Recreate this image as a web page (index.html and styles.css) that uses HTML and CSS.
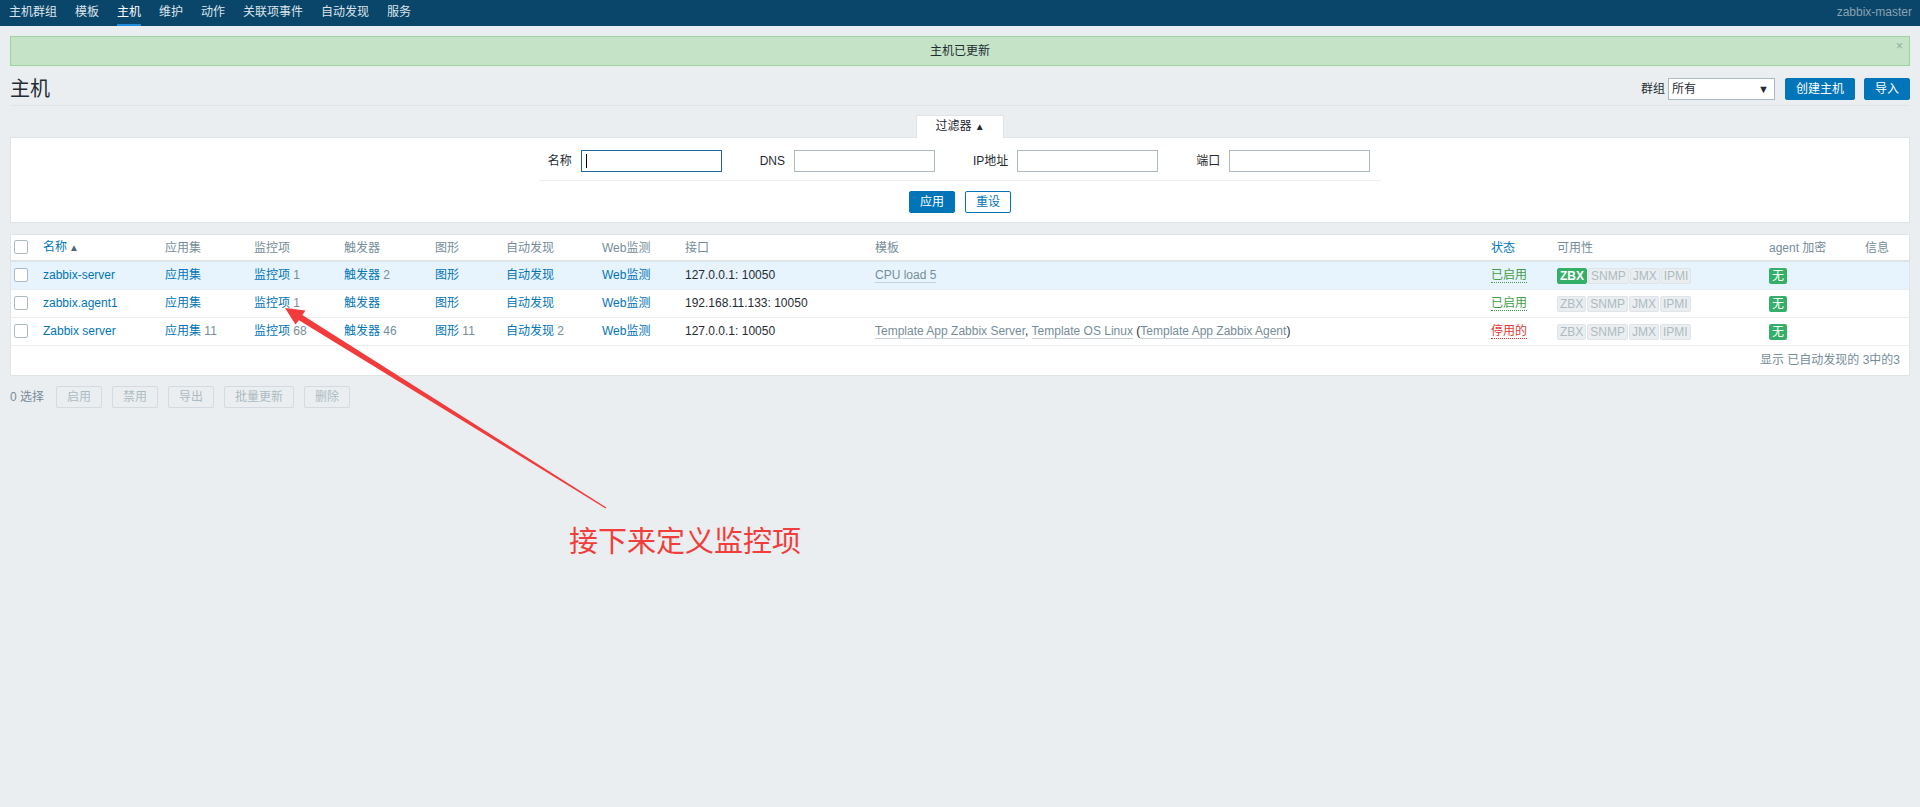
FILE: index.html
```html
<!DOCTYPE html>
<html lang="zh-CN">
<head>
<meta charset="utf-8">
<title>主机</title>
<link rel="stylesheet" href="styles.css">
</head>
<body>
<header class="topnav">
  <nav class="topnav-menu">
    <a class="topnav-item"><span>主机群组</span></a>
    <a class="topnav-item"><span>模板</span></a>
    <a class="topnav-item active"><span>主机</span></a>
    <a class="topnav-item"><span>维护</span></a>
    <a class="topnav-item"><span>动作</span></a>
    <a class="topnav-item"><span>关联项事件</span></a>
    <a class="topnav-item"><span>自动发现</span></a>
    <a class="topnav-item"><span>服务</span></a>
  </nav>
  <div class="server-name">zabbix-master</div>
</header>

<main class="page">
  <div class="msg-good">
    主机已更新
    <span class="msg-close">×</span>
  </div>

  <div class="header-title">
    <h1>主机</h1>
    <div class="header-controls">
      <span class="ctrl-label">群组</span>
      <div class="select"><span>所有</span><span class="select-arrow">▼</span></div>
      <button class="btn btn-primary btn-create">创建主机</button>
      <button class="btn btn-primary">导入</button>
    </div>
  </div>

  <div class="filter">
    <div class="filter-tab-row">
      <div class="filter-tab">过滤器 <span class="tab-arrow">▲</span></div>
    </div>
    <div class="filter-box">
      <div class="filter-forms">
        <div class="filter-cell"><label>名称</label><div class="input focus"><span class="caret"></span></div></div>
        <div class="filter-cell"><label>DNS</label><div class="input"></div></div>
        <div class="filter-cell"><label>IP地址</label><div class="input"></div></div>
        <div class="filter-cell"><label>端口</label><div class="input"></div></div>
      </div>
      <div class="filter-buttons">
        <button class="btn btn-primary">应用</button>
        <button class="btn btn-alt">重设</button>
      </div>
    </div>
  </div>

  <div class="list">
    <table class="list-table">
      <colgroup>
        <col class="c-check"><col class="c-name"><col class="c-apps"><col class="c-items"><col class="c-trig"><col class="c-graph"><col class="c-disc"><col class="c-web"><col class="c-iface"><col class="c-tpl"><col class="c-status"><col class="c-avail"><col class="c-enc"><col class="c-info">
      </colgroup>
      <thead>
        <tr>
          <th class="td-check"><span class="checkbox"></span></th>
          <th><a class="link">名称</a><span class="sort-arrow">▲</span></th>
          <th>应用集</th>
          <th>监控项</th>
          <th>触发器</th>
          <th>图形</th>
          <th>自动发现</th>
          <th>Web监测</th>
          <th>接口</th>
          <th>模板</th>
          <th><a class="link">状态</a></th>
          <th>可用性</th>
          <th>agent 加密</th>
          <th>信息</th>
        </tr>
      </thead>
      <tbody>
        <tr class="row-hover">
          <td class="td-check"><span class="checkbox"></span></td>
          <td><a class="link">zabbix-server</a></td>
          <td><a class="link">应用集</a></td>
          <td><a class="link">监控项</a><span class="count"> 1</span></td>
          <td><a class="link">触发器</a><span class="count"> 2</span></td>
          <td><a class="link">图形</a></td>
          <td><a class="link">自动发现</a></td>
          <td><a class="link">Web监测</a></td>
          <td>127.0.0.1: 10050</td>
          <td><a class="link-alt">CPU load 5</a></td>
          <td><a class="status-on">已启用</a></td>
          <td><span class="badge on">ZBX</span><span class="badge">SNMP</span><span class="badge">JMX</span><span class="badge">IPMI</span></td>
          <td><span class="badge-enc">无</span></td>
          <td></td>
        </tr>
        <tr>
          <td class="td-check"><span class="checkbox"></span></td>
          <td><a class="link">zabbix.agent1</a></td>
          <td><a class="link">应用集</a></td>
          <td><a class="link">监控项</a><span class="count"> 1</span></td>
          <td><a class="link">触发器</a></td>
          <td><a class="link">图形</a></td>
          <td><a class="link">自动发现</a></td>
          <td><a class="link">Web监测</a></td>
          <td>192.168.11.133: 10050</td>
          <td></td>
          <td><a class="status-on">已启用</a></td>
          <td><span class="badge">ZBX</span><span class="badge">SNMP</span><span class="badge">JMX</span><span class="badge">IPMI</span></td>
          <td><span class="badge-enc">无</span></td>
          <td></td>
        </tr>
        <tr>
          <td class="td-check"><span class="checkbox"></span></td>
          <td><a class="link">Zabbix server</a></td>
          <td><a class="link">应用集</a><span class="count"> 11</span></td>
          <td><a class="link">监控项</a><span class="count"> 68</span></td>
          <td><a class="link">触发器</a><span class="count"> 46</span></td>
          <td><a class="link">图形</a><span class="count"> 11</span></td>
          <td><a class="link">自动发现</a><span class="count"> 2</span></td>
          <td><a class="link">Web监测</a></td>
          <td>127.0.0.1: 10050</td>
          <td class="tpl"><a class="link-alt">Template App Zabbix Server</a>, <a class="link-alt">Template OS Linux</a> (<a class="link-alt">Template App Zabbix Agent</a>)</td>
          <td><a class="status-off">停用的</a></td>
          <td><span class="badge">ZBX</span><span class="badge">SNMP</span><span class="badge">JMX</span><span class="badge">IPMI</span></td>
          <td><span class="badge-enc">无</span></td>
          <td></td>
        </tr>
      </tbody>
    </table>
    <div class="table-paging">显示 已自动发现的 3中的3</div>
  </div>

  <div class="action-bar">
    <span class="selected-count">0 选择</span>
    <button class="btn btn-disabled">启用</button>
    <button class="btn btn-disabled">禁用</button>
    <button class="btn btn-disabled">导出</button>
    <button class="btn btn-disabled">批量更新</button>
    <button class="btn btn-disabled">删除</button>
  </div>
</main>

<svg class="annotation-arrow" width="1920" height="807" viewBox="0 0 1920 807" xmlns="http://www.w3.org/2000/svg">
  <polygon points="285,308 305.5,310.5 302.3,315 606.4,507.6 605.6,508.4 298.9,320.2 295.5,324.5" fill="#f23b3b"/>
</svg>
<div class="annotation-text">接下来定义监控项</div>
</body>
</html>
```

FILE: styles.css
```css
* { box-sizing: border-box; }

html, body {
  margin: 0;
  padding: 0;
}

body {
  background: #ebeef0;
  color: #1f2c33;
  font-family: "Liberation Sans", Arial, "Noto Sans CJK SC", sans-serif;
  font-size: 12px;
  line-height: 14px;
  width: 1920px;
  min-height: 807px;
  position: relative;
}

a { text-decoration: none; cursor: pointer; }

/* top navigation */
.topnav {
  height: 26px;
  background: #0a466a;
  display: flex;
  justify-content: space-between;
  align-items: stretch;
}

.topnav-menu {
  display: flex;
}

.topnav-item {
  display: block;
  padding: 0 9px;
  color: #dce5eb;
}

.topnav-item span {
  display: inline-block;
  height: 26px;
  line-height: 25px;
  border-bottom: 2px solid transparent;
}

.topnav-item.active { color: #ffffff; }
.topnav-item.active span { border-bottom-color: #1f8ad6; }

.server-name {
  color: #8aa2b2;
  line-height: 25px;
  padding-right: 8px;
}

/* page */
.page {
  padding: 0 10px;
}

.msg-good {
  position: relative;
  margin-top: 10px;
  height: 30px;
  line-height: 28px;
  text-align: center;
  background: #c5e3c7;
  border: 1px solid #9dd3a0;
  color: #1f2c33;
}

.msg-close {
  position: absolute;
  right: 6px;
  top: 2px;
  line-height: 14px;
  font-size: 12px;
  color: #94aaa0;
}

.header-title {
  display: flex;
  justify-content: space-between;
  align-items: center;
  padding: 12px 0 5px;
  border-bottom: 1px solid #dfe4e7;
}

.header-title h1 {
  margin: 0;
  font-size: 20px;
  line-height: 22px;
  font-weight: normal;
  color: #1f2c33;
}

.header-controls {
  display: flex;
  align-items: center;
}

.ctrl-label {
  margin-right: 3px;
  color: #1f2c33;
}

.select {
  width: 107px;
  height: 22px;
  background: #ffffff;
  border: 1px solid #acbbc2;
  display: flex;
  justify-content: space-between;
  align-items: center;
  padding: 0 5px 0 3px;
  color: #1f2c33;
}

.select-arrow {
  font-size: 11px;
  color: #1f2c33;
}

.btn {
  height: 22px;
  padding: 0 10px;
  font-family: inherit;
  font-size: 12px;
  line-height: 20px;
  border-radius: 2px;
  border: 1px solid transparent;
  cursor: pointer;
}

.btn-primary {
  background: #0275b8;
  border-color: #0275b8;
  color: #ffffff;
}

.btn-alt {
  background: #ffffff;
  border-color: #0275b8;
  color: #0275b8;
}

.btn-disabled {
  background: #ebeef0;
  border-color: #d4dadf;
  color: #acbbc2;
}

.header-controls .btn { margin-left: 10px; }
.header-controls .btn + .btn { margin-left: 9px; }

/* filter */
.filter-tab-row {
  display: flex;
  justify-content: center;
  margin-top: 9px;
}

.filter-tab {
  position: relative;
  z-index: 1;
  width: 88px;
  height: 23px;
  margin-bottom: -1px;
  background: #ffffff;
  border: 1px solid #dfe4e7;
  border-bottom: none;
  text-align: center;
  line-height: 21px;
  color: #1f2c33;
}

.tab-arrow {
  font-size: 10px;
}

.filter-box {
  background: #ffffff;
  border: 1px solid #dfe4e7;
  padding-bottom: 9px;
}

.filter-forms {
  display: flex;
  justify-content: center;
  width: 842px;
  margin: 0 auto;
  padding: 12px 10px 8px 8px;
  border-bottom: 1px solid #ebeef0;
  gap: 38px;
}

.filter-cell {
  display: flex;
  align-items: center;
}

.filter-cell label {
  margin-right: 9px;
  color: #1f2c33;
  white-space: nowrap;
}

.input {
  width: 141px;
  height: 22px;
  border: 1px solid #acbbc2;
  background: #ffffff;
  display: flex;
  align-items: center;
  padding-left: 4px;
}

.input.focus { border-color: #1f65a0; }

.caret {
  display: inline-block;
  width: 1px;
  height: 14px;
  background: #000000;
}

.filter-buttons {
  display: flex;
  justify-content: center;
  gap: 10px;
  margin-top: 10px;
}

/* list table */
.list {
  margin-top: 11px;
  background: #ffffff;
  border: 1px solid #dfe4e7;
}

.list-table {
  width: 100%;
  table-layout: fixed;
  border-collapse: separate;
  border-spacing: 0;
}

.c-check { width: 27px; }
.c-name { width: 122px; }
.c-apps { width: 89px; }
.c-items { width: 90px; }
.c-trig { width: 91px; }
.c-graph { width: 71px; }
.c-disc { width: 96px; }
.c-web { width: 83px; }
.c-iface { width: 190px; }
.c-tpl { width: 616px; }
.c-status { width: 66px; }
.c-avail { width: 212px; }
.c-enc { width: 96px; }
.c-info { width: 49px; }

.list-table th {
  font-weight: normal;
  text-align: left;
  color: #768d99;
  padding: 0 5px;
  line-height: 24px;
  height: 26px;
  border-bottom: 2px solid #dfe4e7;
  white-space: nowrap;
}

.list-table td {
  padding: 0 5px;
  line-height: 27px;
  height: 28px;
  border-bottom: 1px solid #ebeef0;
  white-space: nowrap;
  color: #1f2c33;
}

.list-table .td-check {
  padding: 0 0 0 3px;
}

.row-hover td { background: #e8f4fd; }

.checkbox {
  display: inline-block;
  width: 14px;
  height: 14px;
  border: 1px solid #acbbc2;
  border-radius: 2px;
  background: #ffffff;
  vertical-align: middle;
  margin-top: -2px;
}

.link { color: #0275b8; }
.count { color: #768d99; }

.sort-arrow {
  font-size: 10px;
  color: #4f6672;
  margin-left: 2px;
}

.link-alt {
  color: #768d99;
  border-bottom: 1px solid #c8d2d8;
}

.tpl { color: #768d99; }

.status-on {
  color: #429e47;
  border-bottom: 1px dotted #429e47;
}

.status-off {
  color: #e33734;
  border-bottom: 1px dotted #e33734;
}

.badge {
  display: inline-block;
  height: 16px;
  line-height: 14px;
  padding: 0 2px;
  margin-right: 1px;
  font-size: 12px;
  background: #ebeef0;
  border: 1px solid #dfe4e7;
  color: #acbbc2;
  vertical-align: middle;
  border-radius: 2px;
}

.badge.on {
  background: #34af67;
  border-color: #34af67;
  color: #ffffff;
  font-weight: bold;
}

.badge-enc {
  display: inline-block;
  height: 16px;
  line-height: 16px;
  padding: 0 3px;
  background: #34af67;
  color: #ffffff;
  border-radius: 2px;
  vertical-align: middle;
}

.table-paging {
  height: 29px;
  line-height: 29px;
  text-align: right;
  padding-right: 9px;
  color: #768d99;
}

/* action bar */
.action-bar {
  display: flex;
  align-items: center;
  margin-top: 10px;
  gap: 10px;
}

.selected-count {
  color: #768d99;
  width: 36px;
}

/* annotation */
.annotation-arrow {
  position: absolute;
  left: 0;
  top: 0;
  pointer-events: none;
}

.annotation-text {
  position: absolute;
  left: 569px;
  top: 523px;
  font-family: "Noto Sans CJK SC", sans-serif;
  font-size: 29px;
  line-height: 32px;
  color: #f23d3d;
  white-space: nowrap;
}
```
